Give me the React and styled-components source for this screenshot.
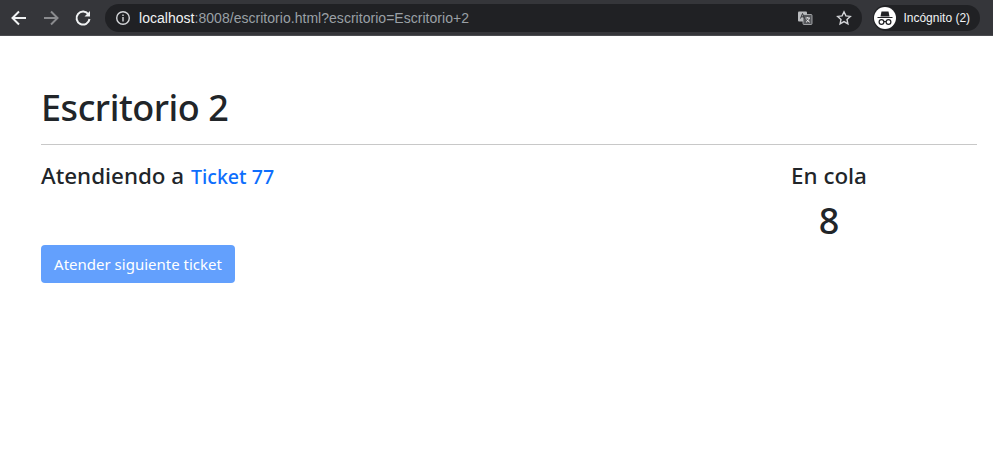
import React from "react";
import styled, { createGlobalStyle } from "styled-components";

const GlobalStyle = createGlobalStyle`
  html, body {
    margin: 0;
    background: #fff;
    overflow: hidden;
  }

  body {
    font-family: "Noto Sans", "Open Sans", sans-serif;
    color: #212529;
  }
`;

const Toolbar = styled.header`
  height: 35px;
  background: #35363a;
  border-bottom: 1px solid #4a4b4f;
  display: flex;
  align-items: center;
  padding: 0 13px 0 10px;
`;

const NavButton = styled.span`
  width: 18px;
  height: 18px;
  margin-right: ${(p) => p.$gap}px;
  display: flex;
  color: ${(p) => (p.$off ? "#8a8b8e" : "#f1f3f4")};
`;

const Omnibox = styled.div`
  width: 760px;
  height: 28px;
  margin-left: 1px;
  border-radius: 14px;
  background: #202124;
  display: flex;
  align-items: center;
  padding: 0 10px;
  box-sizing: border-box;
`;

const UrlBar = styled.div`
  flex: 1;
  margin-left: 8px;
  font-family: "Liberation Sans", sans-serif;
  font-size: 14px;
  letter-spacing: 0.03px;
  color: #9aa0a6;
  white-space: nowrap;

  b {
    color: #f1f3f4;
    font-weight: 400;
  }
`;

const OmniIcon = styled.span`
  width: 16px;
  height: 16px;
  margin-left: ${(p) => p.$gap || 0}px;
  display: flex;
  color: ${(p) => p.$color || "#d4d6d9"};
`;

const Profile = styled.div`
  margin-left: 11px;
  width: 107px;
  height: 26px;
  border-radius: 13px;
  background: #202124;
  display: flex;
  align-items: center;
  box-sizing: border-box;
  padding-left: 1px;
  gap: 7px;
  color: #f1f3f4;
  font-family: "Liberation Sans", sans-serif;
  font-size: 12px;
  white-space: nowrap;
`;

const Avatar = styled.span`
  width: 22px;
  height: 22px;
  border-radius: 50%;
  background: #fff;
  display: flex;
  align-items: center;
  justify-content: center;
`;

const Page = styled.main`
  padding: 45px 16px 0 41px;
`;

const Title = styled.h1`
  margin: 0;
  font-size: 36px;
  font-weight: 500;
  letter-spacing: -0.45px;
  line-height: 54px;
`;

const Divider = styled.hr`
  margin: 9px 0 0;
  border: 0;
  border-top: 1px solid #c8c8c8;
`;

const Row = styled.section`
  display: grid;
  grid-template-columns: 1fr 296px;
  margin-top: 14px;
`;

const Serving = styled.h3`
  margin: 0;
  font-size: 22.4px;
  font-weight: 500;
  line-height: 33px;
`;

const TicketName = styled.small`
  font-size: 19.6px;
  font-weight: 500;
  margin-left: 1px;
  color: #0d6efd;
`;

const Queue = styled.div`
  text-align: center;
`;

const QueueLabel = styled.h4`
  margin: 0;
  font-size: 22.4px;
  font-weight: 500;
  line-height: 33px;
`;

const QueueCount = styled.h2`
  margin: 7px 0 0;
  font-size: 36px;
  font-weight: 500;
  line-height: 44px;
`;

const AttendButton = styled.button`
  display: block;
  margin-top: 2px;
  width: 194px;
  height: 38px;
  padding: 0;
  border: 0;
  border-radius: 4px;
  background: #63a0fd;
  color: #fff;
  font-family: inherit;
  font-size: 15px;
`;

const App = () => {
  return (
    <>
      <GlobalStyle />
      <Toolbar>
        <NavButton $gap={14}>
          <svg viewBox="0 0 18 18" fill="none" stroke="currentColor" strokeWidth="2">
            <path d="M16 9H2.5M9 2.5L2.5 9L9 15.5" />
          </svg>
        </NavButton>
        <NavButton $gap={14} $off>
          <svg viewBox="0 0 18 18" fill="none" stroke="currentColor" strokeWidth="2">
            <path d="M2 9h13.5M9 2.5L15.5 9L9 15.5" />
          </svg>
        </NavButton>
        <NavButton $gap={12}>
          <svg viewBox="0 0 18 18" fill="none" stroke="currentColor" strokeWidth="2">
            <path d="M14.5 5.5A6.5 6.5 0 1 0 15.5 10" />
            <path d="M16 2v5.5h-5.5z" fill="currentColor" stroke="none" />
          </svg>
        </NavButton>
        <Omnibox>
          <OmniIcon>
            <svg viewBox="0 0 16 16" fill="none" stroke="currentColor" strokeWidth="1.4">
              <circle cx="8" cy="8" r="6.3" />
              <path d="M8 7v4.5M8 4.4v1.5" />
            </svg>
          </OmniIcon>
          <UrlBar>
            <b>localhost</b>:8008/escritorio.html?escritorio=Escritorio+2
          </UrlBar>
          <OmniIcon $color="#b9bbbe">
            <svg viewBox="0 0 16 16">
              <rect x="1" y="1.5" width="9" height="10" rx="1" fill="currentColor" />
              <rect x="6" y="4.5" width="9" height="10" rx="1" fill="#55575b" stroke="currentColor" strokeWidth="0.8" />
              <path d="M8.5 8h4.5M10.7 7v1M12.2 8c-.4 2-1.6 3.4-3.2 4.2M9.6 9.4c.6 1.2 1.7 2.2 3.2 2.8" fill="none" stroke="#fff" strokeWidth="0.8" />
              <path d="M3.5 8.5l2-5 2 5M4.3 6.8h2.4" fill="none" stroke="#35363a" strokeWidth="1" />
            </svg>
          </OmniIcon>
          <OmniIcon $gap={23}>
            <svg viewBox="0 0 16 16" fill="none" stroke="currentColor" strokeWidth="1.4">
              <path d="M8 1.8l1.9 4.1 4.4.5-3.3 3 .9 4.4L8 11.6l-3.9 2.2.9-4.4-3.3-3 4.4-.5z" />
            </svg>
          </OmniIcon>
        </Omnibox>
        <Profile>
          <Avatar>
            <svg width="18" height="18" viewBox="0 0 18 18">
              <path d="M1.5 8h15v1h-15zM4.5 7.5l1-5h7l1 5z" fill="#202124" />
              <circle cx="5.5" cy="13" r="2.4" fill="none" stroke="#202124" strokeWidth="1.2" />
              <circle cx="12.5" cy="13" r="2.4" fill="none" stroke="#202124" strokeWidth="1.2" />
              <path d="M7.9 12.6h2.2" stroke="#202124" strokeWidth="1.2" />
            </svg>
          </Avatar>
          Incógnito (2)
        </Profile>
      </Toolbar>
      <Page>
        <Title>Escritorio 2</Title>
        <Divider />
        <Row>
          <div>
            <Serving>
              Atendiendo a <TicketName>Ticket 77</TicketName>
            </Serving>
          </div>
          <Queue>
            <QueueLabel>En cola</QueueLabel>
            <QueueCount>8</QueueCount>
          </Queue>
        </Row>
        <AttendButton>Atender siguiente ticket</AttendButton>
      </Page>
    </>
  );
};

export default App;
